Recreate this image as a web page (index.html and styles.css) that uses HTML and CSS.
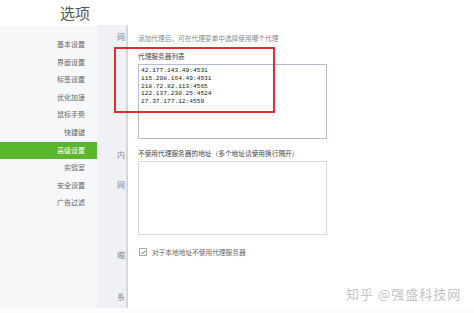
FILE: index.html
```html
<!doctype html>
<html>
<head>
<meta charset="utf-8">
<title>选项</title>
<link rel="stylesheet" href="styles.css">
</head>
<body>
<div class="page">
	<div class="top">选项</div>
	<div class="wrap">
		<ul class="menu">
			<li>基本设置</li>
			<li>界面设置</li>
			<li>标签设置</li>
			<li>优化加速</li>
			<li>鼠标手势</li>
			<li>快捷键</li>
			<li class="on">高级设置</li>
			<li>实验室</li>
			<li>安全设置</li>
			<li>广告过滤</li>
		</ul>
		<div class="strip">
			<p class="s1">网</p>
			<p class="s2">内</p>
			<p class="s3">网</p>
			<p class="s4">缩</p>
			<p class="s5">系</p>
		</div>
		<div class="main">
			<p class="tip">添加代理后，可在代理菜单中选择使用哪个代理</p>
			<p class="tit">代理服务器列表</p>
			<div class="box box1">42.177.143.49:4531<br>115.208.164.49:4531<br>218.72.82.113:4565<br>122.137.230.25:4524<br>27.37.177.12:4559</div>
			<p class="tit tit2">不使用代理服务器的地址（多个地址请使用换行隔开）</p>
			<div class="box box2"></div>
			<div class="check">
				<span class="cb"><svg width="8" height="8" viewBox="0 0 8 8"><path d="M1.5 4.2 L3.2 6 L6.6 1.8" fill="none" stroke="#3f9a2a" stroke-width="1.3"/></svg></span>
				<span>对于本地地址不使用代理服务器</span>
			</div>
		</div>
	</div>
	<div class="mark"></div>
	<div class="wm">知乎 @强盛科技网</div>
</div>
</body>
</html>
```
FILE: styles.css
```css
*{margin:0px; padding:0px;}
li{list-style:none;}
body{background:#fff; font-family:"Noto Sans CJK SC","Noto Sans",sans-serif;}
.page{width:474px; height:313px; position:relative; overflow:hidden; display:flex; flex-direction:column;}
.top{height:25px; padding-left:60px; font-size:15px; line-height:26px; color:#555; background:#fff;}
.wrap{flex:1; display:flex; border-bottom:5px solid #fbfcfd;}
.menu{width:97px; background:#f7f8fa; padding-top:11px;}
.menu li{height:17.6px; line-height:17.6px; text-align:right; padding-right:12px; font-size:7px; color:#666;}
.menu li.on{background:#5ab62c; color:#fff;}
.strip{width:31px; background:#eff1f4; border-right:2px solid #d5d9de; overflow:hidden; font-size:8px; color:#888; padding-left:20px; box-sizing:border-box;}
.strip p{height:10px; line-height:10px; white-space:nowrap;}
.s1{margin-top:7px;}
.s2{margin-top:108px;}
.s3{margin-top:20px;}
.s4{margin-top:60px;}
.s5{margin-top:32px;}
.main{flex:1; background:#fff; padding:8px 0 0 10px;}
.tip{font-size:6.7px; line-height:10px; color:#888;}
.tit{font-size:6.7px; line-height:10px; color:#444; margin-top:8px;}
.tit2{margin-top:9px;}
.box{width:189px; box-sizing:border-box; margin-top:3px;}
.box1{height:75px; border:1px solid #b4bccb; padding:2px 0 0 2px; font-family:"Liberation Mono",monospace; font-size:6.2px; line-height:7.8px; color:#222;}
.box2{height:74px; border:1px solid #d6d8dc;}
.check{display:flex; align-items:center; margin-top:12px; padding-left:1px; font-size:6.7px; color:#666;}
.cb{width:8px; height:8px; border:1px solid #a8a8a8; box-sizing:border-box; display:flex; align-items:center; justify-content:center; margin-right:5px; background:#fff;}
.cb svg{display:block; width:7px; height:7px;}
.mark{position:absolute; left:114px; top:47px; width:161px; height:66px; border:2px solid #d9312f; box-sizing:border-box;}
.wm{position:absolute; left:346px; top:286px; font-size:13px; line-height:16px; color:#c4c4c4; letter-spacing:1px;}
```
